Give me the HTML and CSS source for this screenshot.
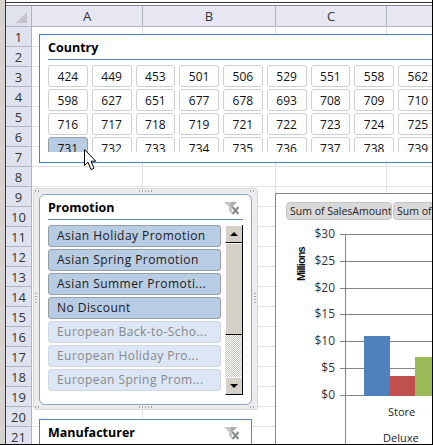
FILE: index.html
```html
<!DOCTYPE html>
<html lang="en">
<head>
<meta charset="utf-8">
<title>Slicers</title>
<link rel="stylesheet" href="styles.css">
</head>
<body>
<div class="window">
  <div class="strip"></div>
  <div class="main">
    <div class="topbar"></div>
    <div class="sheet">
      <div class="colheads">
        <div class="corner"><svg width="25" height="19" viewBox="0 0 25 19"><path d="M21 6V17H10Z" fill="#c3c5c9"/></svg></div>
        <div class="colhead col-a">A</div>
        <div class="colhead col-b">B</div>
        <div class="colhead col-c">C</div>
        <div class="colhead col-d"></div>
      </div>
      <div class="rows">
        <div class="row"><div class="rowhead">1</div><div class="cell col-a"></div><div class="cell col-b"></div><div class="cell col-c"></div><div class="cell col-d"></div></div>
        <div class="row"><div class="rowhead">2</div><div class="cell col-a"></div><div class="cell col-b"></div><div class="cell col-c"></div><div class="cell col-d"></div></div>
        <div class="row"><div class="rowhead">3</div><div class="cell col-a"></div><div class="cell col-b"></div><div class="cell col-c"></div><div class="cell col-d"></div></div>
        <div class="row"><div class="rowhead">4</div><div class="cell col-a"></div><div class="cell col-b"></div><div class="cell col-c"></div><div class="cell col-d"></div></div>
        <div class="row"><div class="rowhead">5</div><div class="cell col-a"></div><div class="cell col-b"></div><div class="cell col-c"></div><div class="cell col-d"></div></div>
        <div class="row"><div class="rowhead">6</div><div class="cell col-a"></div><div class="cell col-b"></div><div class="cell col-c"></div><div class="cell col-d"></div></div>
        <div class="row"><div class="rowhead">7</div><div class="cell col-a"></div><div class="cell col-b"></div><div class="cell col-c"></div><div class="cell col-d"></div></div>
        <div class="row"><div class="rowhead">8</div><div class="cell col-a"></div><div class="cell col-b"></div><div class="cell col-c"></div><div class="cell col-d"></div></div>
        <div class="row"><div class="rowhead">9</div><div class="cell col-a"></div><div class="cell col-b"></div><div class="cell col-c"></div><div class="cell col-d"></div></div>
        <div class="row"><div class="rowhead">10</div><div class="cell col-a"></div><div class="cell col-b"></div><div class="cell col-c"></div><div class="cell col-d"></div></div>
        <div class="row"><div class="rowhead">11</div><div class="cell col-a"></div><div class="cell col-b"></div><div class="cell col-c"></div><div class="cell col-d"></div></div>
        <div class="row"><div class="rowhead">12</div><div class="cell col-a"></div><div class="cell col-b"></div><div class="cell col-c"></div><div class="cell col-d"></div></div>
        <div class="row"><div class="rowhead">13</div><div class="cell col-a"></div><div class="cell col-b"></div><div class="cell col-c"></div><div class="cell col-d"></div></div>
        <div class="row"><div class="rowhead">14</div><div class="cell col-a"></div><div class="cell col-b"></div><div class="cell col-c"></div><div class="cell col-d"></div></div>
        <div class="row"><div class="rowhead">15</div><div class="cell col-a"></div><div class="cell col-b"></div><div class="cell col-c"></div><div class="cell col-d"></div></div>
        <div class="row"><div class="rowhead">16</div><div class="cell col-a"></div><div class="cell col-b"></div><div class="cell col-c"></div><div class="cell col-d"></div></div>
        <div class="row"><div class="rowhead">17</div><div class="cell col-a"></div><div class="cell col-b"></div><div class="cell col-c"></div><div class="cell col-d"></div></div>
        <div class="row"><div class="rowhead">18</div><div class="cell col-a"></div><div class="cell col-b"></div><div class="cell col-c"></div><div class="cell col-d"></div></div>
        <div class="row"><div class="rowhead">19</div><div class="cell col-a"></div><div class="cell col-b"></div><div class="cell col-c"></div><div class="cell col-d"></div></div>
        <div class="row"><div class="rowhead">20</div><div class="cell col-a"></div><div class="cell col-b"></div><div class="cell col-c"></div><div class="cell col-d"></div></div>
        <div class="row"><div class="rowhead">21</div><div class="cell col-a"></div><div class="cell col-b"></div><div class="cell col-c"></div><div class="cell col-d"></div></div>
      </div>

      <section class="slicer country">
        <h2 class="slicer-title">Country</h2>
        <div class="tiles">
          <div class="tile">424</div><div class="tile">449</div><div class="tile">453</div><div class="tile">501</div><div class="tile">506</div><div class="tile">529</div><div class="tile">551</div><div class="tile">558</div><div class="tile">562</div>
          <div class="tile">598</div><div class="tile">627</div><div class="tile">651</div><div class="tile">677</div><div class="tile">678</div><div class="tile">693</div><div class="tile">708</div><div class="tile">709</div><div class="tile">710</div>
          <div class="tile">716</div><div class="tile">717</div><div class="tile">718</div><div class="tile">719</div><div class="tile">721</div><div class="tile">722</div><div class="tile">723</div><div class="tile">724</div><div class="tile">725</div>
          <div class="tile on">731</div><div class="tile">732</div><div class="tile">733</div><div class="tile">734</div><div class="tile">735</div><div class="tile">736</div><div class="tile">737</div><div class="tile">738</div><div class="tile">739</div>
        </div>
      </section>

      <svg class="cursor" width="14" height="22" viewBox="0 0 14 22"><path d="M1.5 .5V16.5L5 13.2 8 20.5 11 19.2 8 12.2H12.8Z" fill="#fff" stroke="#000"/></svg>

      <div class="frame">
        <span class="handle h-tl"></span><span class="handle h-tm"></span><span class="handle h-tr"></span>
        <span class="handle h-bl"></span><span class="handle h-bm"></span><span class="handle h-br"></span>
        <span class="handle-v h-ml"></span><span class="handle-v h-mr"></span>
        <section class="slicer promotion">
          <header class="slicer-head">
            <h2 class="slicer-title">Promotion</h2>
            <svg class="clear" width="16" height="13" viewBox="0 0 16 13"><path d="M0 0H13L8 5V12L5 9V5Z" fill="#c4c6c9"/><path d="M7 0H13L8 5H7Z" fill="#a9abae"/><path d="M8.5 5 14.5 12M14.5 5 8.5 12" stroke="#85878a" stroke-width="2"/></svg>
          </header>
          <div class="list-wrap">
            <div class="list">
              <div class="item on">Asian Holiday Promotion</div>
              <div class="item on">Asian Spring Promotion</div>
              <div class="item on">Asian Summer Promoti...</div>
              <div class="item on">No Discount</div>
              <div class="item off">European Back-to-Scho...</div>
              <div class="item off">European Holiday Pro...</div>
              <div class="item off">European Spring Prom...</div>
            </div>
            <div class="scrollbar">
              <div class="sb-btn"><span class="arrow up"></span></div>
              <div class="sb-thumb"></div>
              <div class="sb-track"></div>
              <div class="sb-btn"><span class="arrow down"></span></div>
            </div>
          </div>
        </section>
      </div>

      <section class="slicer manufacturer">
        <header class="slicer-head">
          <h2 class="slicer-title">Manufacturer</h2>
          <svg class="clear" width="16" height="13" viewBox="0 0 16 13"><path d="M0 0H13L8 5V12L5 9V5Z" fill="#c4c6c9"/><path d="M7 0H13L8 5H7Z" fill="#a9abae"/><path d="M8.5 5 14.5 12M14.5 5 8.5 12" stroke="#85878a" stroke-width="2"/></svg>
        </header>
      </section>

      <section class="chart">
        <div class="fields">
          <div class="field">Sum of SalesAmount</div>
          <div class="field">Sum of SalesAmount</div>
        </div>
        <div class="plot">
          <div class="ytitle">Millions</div>
          <div class="yaxis">
            <div class="tick"><span>$30</span></div>
            <div class="tick"><span>$25</span></div>
            <div class="tick"><span>$20</span></div>
            <div class="tick"><span>$15</span></div>
            <div class="tick"><span>$10</span></div>
            <div class="tick"><span>$5</span></div>
            <div class="tick"><span>$0</span></div>
          </div>
          <div class="bars">
            <div class="bar blue"></div>
            <div class="bar red"></div>
            <div class="bar green"></div>
          </div>
          <div class="xlabels">
            <div class="x1">Store</div>
            <div class="x2">Deluxe</div>
          </div>
        </div>
      </section>
    </div>
  </div>
  <div class="edge"></div>
</div>
</body>
</html>
```
FILE: styles.css
```css
* { box-sizing: border-box; margin: 0; padding: 0; }
html, body { width: 433px; height: 445px; overflow: hidden; background: #fff; }
body { font-family: "Open Sans", sans-serif; color: #000; }
.window { position: relative; display: flex; width: 433px; height: 445px; overflow: hidden; border-bottom: 1px solid #000; border-right: 1px solid #000; }
.strip { width: 6px; flex: none; background: #d6d3ce; border-right: 1px solid #333; }
.main { flex: 1; min-width: 0; display: flex; flex-direction: column; }
.topbar { height: 6px; flex: none; background: #fff; border-top: 2px solid #fff; box-shadow: inset 0 1px 0 #333; border-bottom: 1px solid #888; }
.sheet { position: relative; flex: 1; overflow: hidden; }
.colheads { display: flex; height: 21px; }
.corner { width: 26px; flex: none; background: #e0e3ee; border-right: 1px solid #b0b4c0; border-bottom: 1px solid #b0b4c0; }
.corner svg { display: block; }
.colhead { flex: none; background: #e6e7f2; border-right: 1px solid #b0b4c0; border-bottom: 1px solid #b0b4c0; text-align: center; font-size: 13px; line-height: 21px; color: #333; }
.col-a { width: 111px; }
.col-b { width: 133px; }
.col-c { width: 111px; }
.col-d { width: 50px; }
.rows { display: flex; flex-direction: column; }
.row { display: flex; height: 20px; flex: none; }
.rowhead { width: 26px; flex: none; background: #dfe3ef; border-right: 1px solid #b0b4c0; border-bottom: 1px solid #b0b4c0; text-align: center; font-size: 13px; line-height: 20px; color: #333; }
.cell { flex: none; border-right: 1px solid #e2e2e2; border-bottom: 1px solid #e2e2e2; }

.slicer { position: absolute; background: #fff; border: 1px solid #4a80bd; }
.slicer-title { font-size: 12.5px; font-weight: 700; line-height: 14px; color: #000; }
.country { left: 33px; top: 28px; width: 400px; height: 129px; padding: 6px 0 0 8px; overflow: hidden; }
.country .slicer-title { height: 19px; border-bottom: 1px solid #4a80bd; }
.tiles { display: grid; grid-template-columns: repeat(9, 39.75px); gap: 2px 4px; margin-top: 5px; height: 87px; overflow: hidden; align-content: start; }
.tile { height: 22px; background: #fff; border: 1px solid #d0d0d0; border-radius: 3px; font-size: 12px; line-height: 21px; text-align: center; color: #111; }
.tile.on { background: #b8cce4; border-color: #9a9ea5; }
.cursor { position: absolute; left: 77px; top: 143px; }

.frame { position: absolute; left: 27px; top: 182px; width: 225px; height: 222px; background: #ececec; border: 1px solid #d8d8d8; border-radius: 3px; padding: 5px; }
.handle { position: absolute; width: 6px; height: 2px; background-image: repeating-linear-gradient(90deg, #a8a8a8 0 1px, transparent 1px 3px); }
.handle-v { position: absolute; width: 2px; height: 10px; background-image: repeating-linear-gradient(0deg, #a8a8a8 0 1px, transparent 1px 3px); }
.h-tl { left: 1px; top: 1px; }
.h-tm { left: 105px; top: 1px; width: 13px; }
.h-tr { right: 1px; top: 1px; }
.h-bl { left: 1px; bottom: 1px; }
.h-bm { left: 105px; bottom: 1px; width: 13px; }
.h-br { right: 1px; bottom: 1px; }
.h-ml { left: 1px; top: 104px; }
.h-mr { right: 1px; top: 104px; }
.frame .promotion { position: relative; width: 213px; height: 211px; padding: 5px 8px 0 8px; border-radius: 6px; border-color: #8aa6c6; }
.slicer-head { display: flex; justify-content: space-between; align-items: center; height: 20px; padding-bottom: 3px; border-bottom: 1px solid #5d86b3; }
.clear { margin-right: 3px; }
.list-wrap { display: flex; gap: 4px; margin-top: 5px; }
.list { width: 173px; display: flex; flex-direction: column; gap: 2px; }
.item { height: 22px; border: 1px solid #9a9ea5; border-radius: 3px; background: #b8cce4; font-size: 12px; letter-spacing: .45px; line-height: 20px; padding-left: 8px; color: #1a1a1a; white-space: nowrap; overflow: hidden; }
.item.off { background: #dce6f4; border-color: #cfd6e0; color: #85878b; }
.scrollbar { width: 18px; height: 170px; display: flex; flex-direction: column; border-right: 1px solid #000; }
.sb-btn { height: 18px; flex: none; background: #d4d0c8; border-bottom: 1px solid #000; border-top: 1px solid #fff; border-left: 1px solid #fff; display: flex; align-items: center; justify-content: center; }
.arrow { width: 0; height: 0; border-left: 4px solid transparent; border-right: 4px solid transparent; }
.arrow.up { border-bottom: 4px solid #000; }
.arrow.down { border-top: 4px solid #000; }
.sb-thumb { height: 92px; flex: none; background: #d4d0c8; border-top: 1px solid #fff; border-left: 1px solid #fff; border-bottom: 1px solid #000; }
.sb-track { flex: 1; background-color: #eee; background-image: repeating-conic-gradient(#c8c4bc 0 25%, #fff 0 50%); background-size: 2px 2px; }

.manufacturer { left: 33px; top: 413px; width: 213px; height: 40px; padding: 5px 8px 0 8px; border-color: #5d86b3; }

.chart { position: absolute; left: 269px; top: 187px; width: 170px; height: 260px; background: #fff; border: 1px solid #858585; overflow: hidden; }
.fields { display: flex; gap: 1px; position: absolute; left: 10px; top: 8px; width: 220px; }
.field { flex: none; width: 106px; height: 18px; background: #d9d9d9; border: 1px solid #c4c4c4; border-radius: 4px; font-size: 10.5px; line-height: 16px; padding-left: 3px; color: #222; white-space: nowrap; overflow: hidden; }
.plot { position: absolute; left: 0; top: 0; width: 170px; height: 260px; }
.ytitle { position: absolute; left: 17px; top: 54px; writing-mode: vertical-rl; transform: rotate(180deg); font-size: 11px; font-weight: 700; letter-spacing: -.9px; line-height: 16px; height: 33px; color: #111; font-family: "Liberation Sans", sans-serif; }
.yaxis { position: absolute; left: 0; top: 40px; width: 170px; display: flex; flex-direction: column; height: 162px; justify-content: space-between; }
.tick { height: 1px; margin-left: 64px; background: #868686; position: relative; }
.tick span { position: absolute; right: 111px; top: -9px; font-size: 12px; line-height: 18px; color: #333; }
.bars { position: absolute; left: 88px; top: 142px; height: 60px; display: flex; align-items: flex-end; }
.bar { flex: none; }
.blue { width: 26px; height: 60px; background: #4f81bd; }
.red { width: 25px; height: 20px; background: #c0504d; }
.green { width: 25px; height: 39px; background: #9bbb59; }
.xlabels { position: absolute; left: 69px; top: 40px; height: 220px; width: 101px; border-left: 1px solid #868686; font-size: 11px; color: #222; }
.x1 { position: absolute; left: 42px; top: 170px; }
.x2 { position: absolute; left: 37px; top: 196px; }
```
